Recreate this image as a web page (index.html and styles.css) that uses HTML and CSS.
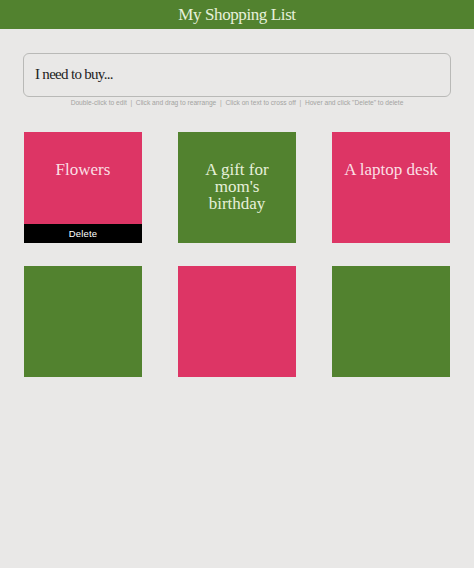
FILE: index.html
```html
<!DOCTYPE html>
<html>
<head>
<meta charset="utf-8" />
<title>My Shopping List</title>
<link rel="stylesheet" href="styles.css">
</head>
<body>
<div class="header">My Shopping List</div>
<div class="main">
	<div class="new_item">I need to buy...</div>
	<div class="hints">Double-click to edit &nbsp;|&nbsp; Click and drag to rearrange &nbsp;|&nbsp; Click on text to cross off &nbsp;|&nbsp; Hover and click "Delete" to delete</div>
	<ul class="list">
		<li class="card pink">
			<div class="text">Flowers</div>
			<div class="delete">Delete</div>
		</li>
		<li class="card green"><div class="text">A gift for mom's birthday</div></li>
		<li class="card pink"><div class="text">A laptop desk</div></li>
		<li class="card green"></li>
		<li class="card pink"></li>
		<li class="card green"></li>
	</ul>
</div>
</body>
</html>
```

FILE: styles.css
```css
html, body { height: 100%; }
body { margin: 0; background: #e9e8e7; font-family: "Liberation Serif", serif; }
ul { padding: 0; margin: 0; }
li { list-style: none; }

.header { height: 29px; line-height: 29px; background: #52822f; color: #e6f0da; font-size: 17px; letter-spacing: -0.4px; text-align: center; }

.main { padding: 24px 24px 0; }

.new_item { height: 42px; line-height: 40px; margin: 0 -1px; padding: 0 11px; border: 1px solid #b9b9b7; border-radius: 6px; color: #222; font-size: 15px; letter-spacing: -0.7px; }
.hints { height: 12px; color: #a3a3a1; font: 6.65px/12px "Liberation Sans", sans-serif; text-align: center; white-space: nowrap; }

.list { margin-top: 23px; display: grid; grid-template-columns: repeat(3, 118px); grid-auto-rows: 111px; column-gap: 36px; row-gap: 23px; }
.card { display: flex; flex-direction: column; justify-content: space-between; overflow: hidden; text-align: center; }
.pink { background: #dd3565; color: #fbdfe4; }
.green { background: #52822f; color: #e6f0da; }
.text { padding: 29px 8px 0; font-size: 17px; line-height: 17px; }
.delete { height: 19px; background: #000; color: #fff; font: 9.5px/19px "Liberation Sans", sans-serif; letter-spacing: 0.2px; }
```
